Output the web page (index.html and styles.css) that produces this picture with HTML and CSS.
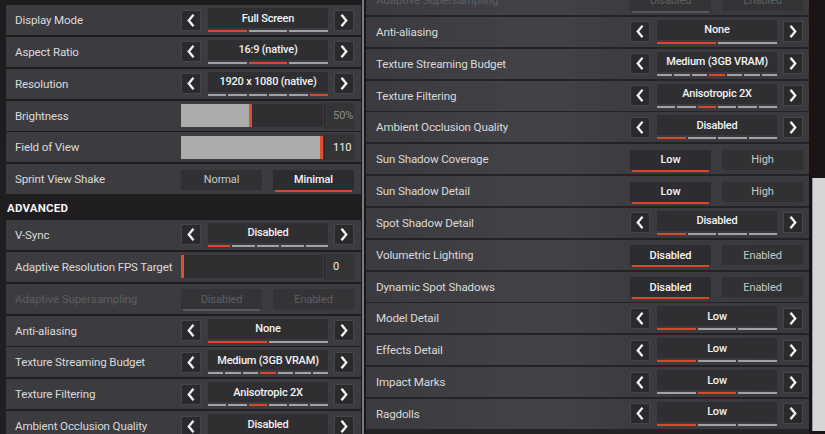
FILE: index.html
```html
<!DOCTYPE html>
<html>
<head>
<meta charset="utf-8">
<link rel="stylesheet" href="styles.css">
</head>
<body>
<div class="screen">
  <div class="panel panel-left">
    <div class="list">
      <div class="row"><span class="label">Display Mode</span>
        <div class="ctl arrows">
          <div class="arr"><svg viewBox="0 0 20 21"><polyline points="12,5 7.5,10.5 12,16"/></svg></div>
          <div class="mid"><div class="val">Full Screen</div><div class="segs"><i class="on"></i><i></i><i></i></div></div>
          <div class="arr"><svg viewBox="0 0 20 21"><polyline points="8,5 12.5,10.5 8,16"/></svg></div>
        </div>
      </div>
      <div class="row"><span class="label">Aspect Ratio</span>
        <div class="ctl arrows">
          <div class="arr"><svg viewBox="0 0 20 21"><polyline points="12,5 7.5,10.5 12,16"/></svg></div>
          <div class="mid"><div class="val">16:9 (native)</div><div class="segs"><i></i><i class="on"></i><i></i></div></div>
          <div class="arr"><svg viewBox="0 0 20 21"><polyline points="8,5 12.5,10.5 8,16"/></svg></div>
        </div>
      </div>
      <div class="row"><span class="label">Resolution</span>
        <div class="ctl arrows">
          <div class="arr"><svg viewBox="0 0 20 21"><polyline points="12,5 7.5,10.5 12,16"/></svg></div>
          <div class="mid"><div class="val">1920 x 1080 (native)</div><div class="segs"><i></i><i></i><i></i><i></i><i></i><i class="on"></i></div></div>
          <div class="arr"><svg viewBox="0 0 20 21"><polyline points="8,5 12.5,10.5 8,16"/></svg></div>
        </div>
      </div>
      <div class="row"><span class="label">Brightness</span>
        <div class="ctl slider">
          <div class="track"><div class="fill" style="width:71px"></div></div>
          <div class="num dim">50%</div>
        </div>
      </div>
      <div class="row"><span class="label">Field of View</span>
        <div class="ctl slider">
          <div class="track"><div class="fill" style="width:142px"></div></div>
          <div class="num">110</div>
        </div>
      </div>
      <div class="row"><span class="label">Sprint View Shake</span>
        <div class="ctl pair">
          <div class="opt">Normal</div>
          <div class="opt sel">Minimal</div>
        </div>
      </div>
    </div>
    <div class="section-title">ADVANCED</div>
    <div class="list">
      <div class="row"><span class="label">V-Sync</span>
        <div class="ctl arrows">
          <div class="arr"><svg viewBox="0 0 20 21"><polyline points="12,5 7.5,10.5 12,16"/></svg></div>
          <div class="mid"><div class="val">Disabled</div><div class="segs"><i class="on"></i><i></i><i></i><i></i><i></i></div></div>
          <div class="arr"><svg viewBox="0 0 20 21"><polyline points="8,5 12.5,10.5 8,16"/></svg></div>
        </div>
      </div>
      <div class="row"><span class="label">Adaptive Resolution FPS Target</span>
        <div class="ctl slider">
          <div class="track"><div class="fill" style="width:3px"></div></div>
          <div class="num">0</div>
        </div>
      </div>
      <div class="row disabled"><span class="label">Adaptive Supersampling</span>
        <div class="ctl pair">
          <div class="opt sel">Disabled</div>
          <div class="opt">Enabled</div>
        </div>
      </div>
      <div class="row"><span class="label">Anti-aliasing</span>
        <div class="ctl arrows">
          <div class="arr"><svg viewBox="0 0 20 21"><polyline points="12,5 7.5,10.5 12,16"/></svg></div>
          <div class="mid"><div class="val">None</div><div class="segs"><i class="on"></i><i></i></div></div>
          <div class="arr"><svg viewBox="0 0 20 21"><polyline points="8,5 12.5,10.5 8,16"/></svg></div>
        </div>
      </div>
      <div class="row"><span class="label">Texture Streaming Budget</span>
        <div class="ctl arrows">
          <div class="arr"><svg viewBox="0 0 20 21"><polyline points="12,5 7.5,10.5 12,16"/></svg></div>
          <div class="mid"><div class="val">Medium (3GB VRAM)</div><div class="segs"><i></i><i></i><i></i><i class="on"></i><i></i><i></i><i></i></div></div>
          <div class="arr"><svg viewBox="0 0 20 21"><polyline points="8,5 12.5,10.5 8,16"/></svg></div>
        </div>
      </div>
      <div class="row"><span class="label">Texture Filtering</span>
        <div class="ctl arrows">
          <div class="arr"><svg viewBox="0 0 20 21"><polyline points="12,5 7.5,10.5 12,16"/></svg></div>
          <div class="mid"><div class="val">Anisotropic 2X</div><div class="segs"><i></i><i></i><i class="on"></i><i></i><i></i><i></i></div></div>
          <div class="arr"><svg viewBox="0 0 20 21"><polyline points="8,5 12.5,10.5 8,16"/></svg></div>
        </div>
      </div>
      <div class="row"><span class="label">Ambient Occlusion Quality</span>
        <div class="ctl arrows">
          <div class="arr"><svg viewBox="0 0 20 21"><polyline points="12,5 7.5,10.5 12,16"/></svg></div>
          <div class="mid"><div class="val">Disabled</div><div class="segs"><i class="on"></i><i></i><i></i><i></i></div></div>
          <div class="arr"><svg viewBox="0 0 20 21"><polyline points="8,5 12.5,10.5 8,16"/></svg></div>
        </div>
      </div>
    </div>
  </div>

  <div class="scroll-line"><div class="thumb"></div></div>

  <div class="panel panel-right">
    <div class="list scrolled">
      <div class="row disabled"><span class="label">Adaptive Supersampling</span>
        <div class="ctl pair">
          <div class="opt sel">Disabled</div>
          <div class="opt">Enabled</div>
        </div>
      </div>
      <div class="row"><span class="label">Anti-aliasing</span>
        <div class="ctl arrows">
          <div class="arr"><svg viewBox="0 0 20 21"><polyline points="12,5 7.5,10.5 12,16"/></svg></div>
          <div class="mid"><div class="val">None</div><div class="segs"><i class="on"></i><i></i></div></div>
          <div class="arr"><svg viewBox="0 0 20 21"><polyline points="8,5 12.5,10.5 8,16"/></svg></div>
        </div>
      </div>
      <div class="row"><span class="label">Texture Streaming Budget</span>
        <div class="ctl arrows">
          <div class="arr"><svg viewBox="0 0 20 21"><polyline points="12,5 7.5,10.5 12,16"/></svg></div>
          <div class="mid"><div class="val">Medium (3GB VRAM)</div><div class="segs"><i></i><i></i><i></i><i class="on"></i><i></i><i></i><i></i></div></div>
          <div class="arr"><svg viewBox="0 0 20 21"><polyline points="8,5 12.5,10.5 8,16"/></svg></div>
        </div>
      </div>
      <div class="row"><span class="label">Texture Filtering</span>
        <div class="ctl arrows">
          <div class="arr"><svg viewBox="0 0 20 21"><polyline points="12,5 7.5,10.5 12,16"/></svg></div>
          <div class="mid"><div class="val">Anisotropic 2X</div><div class="segs"><i></i><i></i><i class="on"></i><i></i><i></i><i></i></div></div>
          <div class="arr"><svg viewBox="0 0 20 21"><polyline points="8,5 12.5,10.5 8,16"/></svg></div>
        </div>
      </div>
      <div class="row"><span class="label">Ambient Occlusion Quality</span>
        <div class="ctl arrows">
          <div class="arr"><svg viewBox="0 0 20 21"><polyline points="12,5 7.5,10.5 12,16"/></svg></div>
          <div class="mid"><div class="val">Disabled</div><div class="segs"><i class="on"></i><i></i><i></i><i></i></div></div>
          <div class="arr"><svg viewBox="0 0 20 21"><polyline points="8,5 12.5,10.5 8,16"/></svg></div>
        </div>
      </div>
      <div class="row"><span class="label">Sun Shadow Coverage</span>
        <div class="ctl pair">
          <div class="opt sel">Low</div>
          <div class="opt">High</div>
        </div>
      </div>
      <div class="row"><span class="label">Sun Shadow Detail</span>
        <div class="ctl pair">
          <div class="opt sel">Low</div>
          <div class="opt">High</div>
        </div>
      </div>
      <div class="row"><span class="label">Spot Shadow Detail</span>
        <div class="ctl arrows">
          <div class="arr"><svg viewBox="0 0 20 21"><polyline points="12,5 7.5,10.5 12,16"/></svg></div>
          <div class="mid"><div class="val">Disabled</div><div class="segs"><i class="on"></i><i></i><i></i><i></i></div></div>
          <div class="arr"><svg viewBox="0 0 20 21"><polyline points="8,5 12.5,10.5 8,16"/></svg></div>
        </div>
      </div>
      <div class="row"><span class="label">Volumetric Lighting</span>
        <div class="ctl pair">
          <div class="opt sel">Disabled</div>
          <div class="opt">Enabled</div>
        </div>
      </div>
      <div class="row"><span class="label">Dynamic Spot Shadows</span>
        <div class="ctl pair">
          <div class="opt sel">Disabled</div>
          <div class="opt">Enabled</div>
        </div>
      </div>
      <div class="row"><span class="label">Model Detail</span>
        <div class="ctl arrows">
          <div class="arr"><svg viewBox="0 0 20 21"><polyline points="12,5 7.5,10.5 12,16"/></svg></div>
          <div class="mid"><div class="val">Low</div><div class="segs"><i class="on"></i><i></i><i></i></div></div>
          <div class="arr"><svg viewBox="0 0 20 21"><polyline points="8,5 12.5,10.5 8,16"/></svg></div>
        </div>
      </div>
      <div class="row"><span class="label">Effects Detail</span>
        <div class="ctl arrows">
          <div class="arr"><svg viewBox="0 0 20 21"><polyline points="12,5 7.5,10.5 12,16"/></svg></div>
          <div class="mid"><div class="val">Low</div><div class="segs"><i class="on"></i><i></i><i></i></div></div>
          <div class="arr"><svg viewBox="0 0 20 21"><polyline points="8,5 12.5,10.5 8,16"/></svg></div>
        </div>
      </div>
      <div class="row"><span class="label">Impact Marks</span>
        <div class="ctl arrows">
          <div class="arr"><svg viewBox="0 0 20 21"><polyline points="12,5 7.5,10.5 12,16"/></svg></div>
          <div class="mid"><div class="val">Low</div><div class="segs"><i></i><i class="on"></i><i></i></div></div>
          <div class="arr"><svg viewBox="0 0 20 21"><polyline points="8,5 12.5,10.5 8,16"/></svg></div>
        </div>
      </div>
      <div class="row"><span class="label">Ragdolls</span>
        <div class="ctl arrows">
          <div class="arr"><svg viewBox="0 0 20 21"><polyline points="12,5 7.5,10.5 12,16"/></svg></div>
          <div class="mid"><div class="val">Low</div><div class="segs"><i class="on"></i><i></i><i></i></div></div>
          <div class="arr"><svg viewBox="0 0 20 21"><polyline points="8,5 12.5,10.5 8,16"/></svg></div>
        </div>
      </div>
    </div>
  </div>

  <div class="edge"><div class="edge-light"></div></div>
</div>
</body>
</html>
```

FILE: styles.css
```css
* { box-sizing: border-box; }
html, body { margin: 0; padding: 0; }
body {
  width: 825px;
  height: 434px;
  overflow: hidden;
  background: #1c191b;
  font-family: "Roboto", "Liberation Sans", sans-serif;
  color: #dcdcdc;
}
.screen {
  display: flex;
  width: 825px;
  height: 434px;
  overflow: hidden;
  background: #1c191b;
}
.panel { overflow: hidden; height: 434px; }
.panel-left {
  width: 361px;
  padding: 5px 0 0 6px;
  background: linear-gradient(180deg, #1e1b1d 0%, #221f22 100%);
}
.panel-right {
  width: 443px;
  background: #232225;
}
.list {
  display: flex;
  flex-direction: column;
  gap: 1.85px;
}
.list.scrolled { margin-top: -15px; }
.row {
  height: 30px;
  display: flex;
  align-items: center;
  background: #3c3c40;
  padding: 0 7px 0 9px;
}
.panel-right .row {
  padding: 0 6px 0 10px;
  background: linear-gradient(90deg, #3b3b3f 0%, #414145 30%, #434347 42%, #3c3c40 60%, #3a3a3e 100%);
}
.label {
  font-size: 11.6px;
  color: #dadada;
  white-space: nowrap;
  letter-spacing: -0.15px;
}
.ctl {
  margin-left: auto;
  width: 173px;
  display: flex;
  align-items: center;
  flex-shrink: 0;
}
.arr {
  width: 20px;
  height: 21px;
  background: #2a2a2d;
  border: 1px solid #46464a;
  display: flex;
  align-items: center;
  justify-content: center;
  flex-shrink: 0;
}
.arr svg { width: 20px; height: 21px; display: block; }
.arr polyline {
  fill: none;
  stroke: #f2f2f2;
  stroke-width: 2.6;
  stroke-linecap: square;
  stroke-linejoin: miter;
}
.mid {
  width: 120px;
  margin: 0 6px 0 7px;
  display: flex;
  flex-direction: column;
  gap: 2px;
}
.val {
  height: 20px;
  background: #2f2f32;
  font-size: 11px;
  font-weight: 500;
  letter-spacing: -0.2px;
  color: #f2f2f2;
  display: flex;
  align-items: center;
  justify-content: center;
  white-space: nowrap;
}
.segs {
  display: flex;
  gap: 2px;
  height: 2px;
}
.segs i {
  flex: 1;
  background: #a2a2a4;
}
.segs i.on { background: #d9482c; }

.pair {
  gap: 11px;
  padding-top: 1px;
}
.opt {
  flex: 1;
  height: 20px;
  font-size: 11px;
  letter-spacing: -0.1px;
  color: #c9c9c9;
  display: flex;
  align-items: center;
  justify-content: center;
  background: #313134;
  box-shadow: 0 4px 0 -2px transparent;
}
.opt.sel {
  color: #f6f6f6;
  font-weight: 500;
  background: #2c2c31;
  box-shadow: 0 4px 0 -2px #d9482c;
}
.disabled .label { color: #5c5c60; }
.disabled .opt { color: #5e5e62; background: #343437; font-weight: normal; }
.disabled .opt.sel { box-shadow: 0 4px 0 -2px #58585c; background: #343437; }

.slider { gap: 1px; }
.track {
  width: 142px;
  height: 23px;
  background: #2f2f32;
  display: flex;
}
.fill {
  height: 100%;
  background: #ababab;
  border-right: 3px solid #e0502f;
}
.num {
  width: 30px;
  height: 26px;
  background: #343437;
  border-left: 1px solid #2a2a2d;
  font-size: 11px;
  color: #eeeeee;
  display: flex;
  align-items: center;
  padding-left: 8px;
}
.num.dim { color: #8a8a8c; }

.section-title {
  height: 25.75px;
  display: flex;
  align-items: center;
  padding-left: 1px;
  padding-top: 1px;
  font-size: 11.5px;
  font-weight: bold;
  color: #f4f4f4;
  letter-spacing: 0.2px;
}

.scroll-line {
  width: 5px;
  height: 434px;
  background: #1a181a;
  padding-left: 1px;
}
.thumb {
  width: 2px;
  height: 434px;
  background: #7c7c80;
}
.edge {
  width: 16px;
  height: 434px;
  background: #1b1415;
  padding: 178px 0 3px 3px;
}
.edge-light {
  height: 253px;
  background: #d6d6d8;
  border-left: 1px solid #9a9a9c;
}
```
